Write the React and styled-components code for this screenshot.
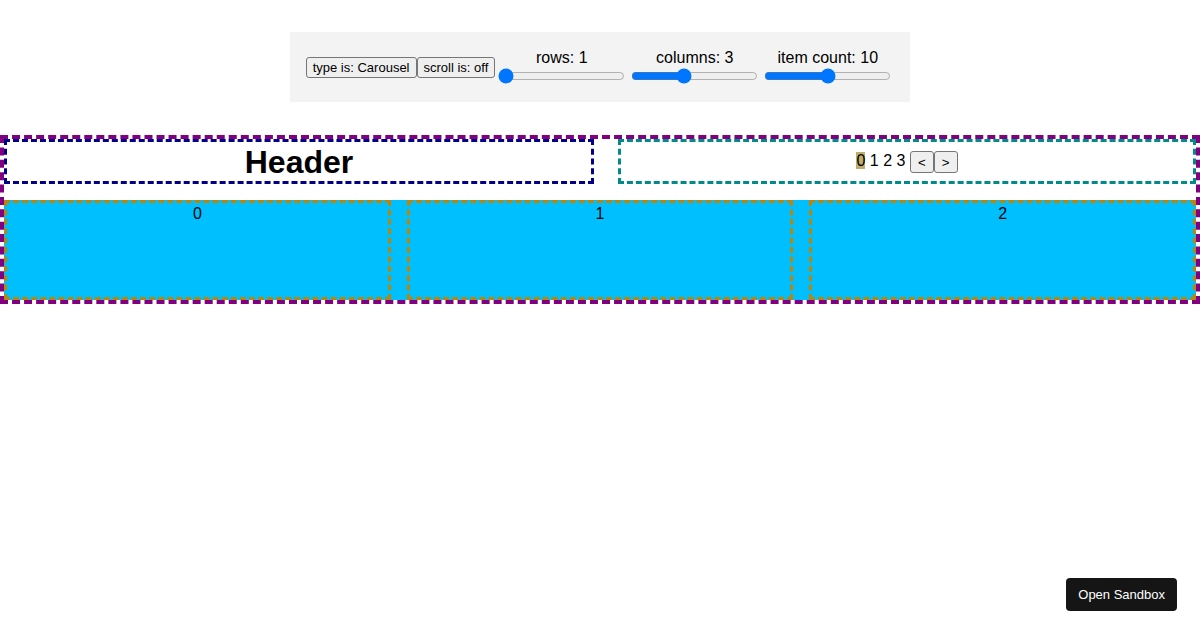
import React, { useState } from "react";
import styled, { createGlobalStyle } from "styled-components";

const GlobalStyle = createGlobalStyle`
  html, body { margin: 0; padding: 0; background: #ffffff; }
  body { font-family: "Liberation Sans", Arial, sans-serif; color: #000; }
`;

const Page = styled.div`
  padding-top: 32px;
`;

const Controls = styled.div`
  width: fit-content;
  margin: 0 auto 33px;
  background: #f3f3f3;
  padding: 16px;
  display: flex;
  align-items: center;
`;

const ToggleButton = styled.button`
  font-family: "Liberation Sans", Arial, sans-serif;
  font-size: 13px;
  line-height: 15px;
  padding: 2px 6px;
  margin: 0;
  background: #efefef;
  color: #000;
  border: 1px solid #767676;
  border-radius: 3px;
  cursor: pointer;
`;

const SliderField = styled.label`
  display: flex;
  flex-direction: column;
  align-items: center;
  font-size: 16px;
  line-height: 18px;
  padding-top: 1px;
`;

const Range = styled.input`
  width: 127px;
  height: 16px;
  margin: 1px 3px 2px;
  accent-color: #0075ff;
`;

const Carousel = styled.div`
  border: 4px dashed purple;
  display: flex;
  flex-direction: column;
  gap: 16px;
`;

const HeaderRow = styled.div`
  display: grid;
  grid-template-columns: 590px 1fr;
  gap: 24px;
`;

const TitleBox = styled.div`
  height: 45px;
  box-sizing: border-box;
  border: 3px dashed darkblue;
  display: flex;
  align-items: center;
  justify-content: center;
`;

const Title = styled.h1`
  margin: 0;
  padding-top: 2px;
  font-size: 32px;
  font-weight: bold;
  line-height: 37px;
`;

const PagerBox = styled.div`
  height: 45px;
  box-sizing: border-box;
  border: 3px dashed darkcyan;
  display: flex;
  align-items: center;
  justify-content: center;
`;

const Pager = styled.div`
  font-size: 16px;
  line-height: 18px;
  padding-top: 1px;
`;

const PageNum = styled.span`
  background: ${(p) => (p.$active ? "#bdae6b" : "transparent")};
  cursor: pointer;
`;

const NavButton = styled.button`
  font-family: "Liberation Sans", Arial, sans-serif;
  font-size: 13.333px;
  line-height: 15px;
  height: 22px;
  padding: 1px 7px;
  margin: 0;
  background: #efefef;
  color: #000;
  border: 1px solid #767676;
  border-radius: 3px;
  cursor: pointer;
  vertical-align: middle;
`;

const ItemRow = styled.div`
  display: grid;
  grid-template-columns: repeat(${(p) => p.$cols}, 1fr);
  gap: 16px;
  background: deepskyblue;
`;

const Item = styled.div`
  height: 100px;
  box-sizing: border-box;
  border: 3px dashed darkgoldenrod;
  background: deepskyblue;
  text-align: center;
  font-size: 16px;
  line-height: 18px;
  padding-top: 2px;
`;

const SandboxButton = styled.button`
  position: fixed;
  right: 23px;
  bottom: 19px;
  height: 33px;
  padding: 0 12px;
  background: #151515;
  color: #fff;
  border: none;
  border-radius: 4px;
  font-family: "Liberation Sans", Arial, sans-serif;
  font-size: 13px;
  cursor: pointer;
`;

export default function App() {
  const [type, setType] = useState("Carousel");
  const [scroll, setScroll] = useState(false);
  const [rows, setRows] = useState(1);
  const [cols, setCols] = useState(3);
  const [count, setCount] = useState(10);
  const [page, setPage] = useState(0);

  const perPage = rows * cols;
  const pages = Math.max(1, Math.ceil(count / perPage));
  const start = page * perPage;
  const items = [];
  for (let i = start; i < Math.min(count, start + perPage); i++) items.push(i);

  return (
    <Page>
      <GlobalStyle />
      <Controls>
        <ToggleButton onClick={() => setType(type === "Carousel" ? "Grid" : "Carousel")}>
          type is: {type}
        </ToggleButton>
        <ToggleButton onClick={() => setScroll(!scroll)}>
          scroll is: {scroll ? "on" : "off"}
        </ToggleButton>
        <SliderField>
          rows: {rows}
          <Range type="range" min={1} max={5} value={rows} onChange={(e) => setRows(+e.target.value)} />
        </SliderField>
        <SliderField>
          columns: {cols}
          <Range type="range" min={1} max={6} value={cols} onChange={(e) => setCols(+e.target.value)} />
        </SliderField>
        <SliderField>
          item count: {count}
          <Range type="range" min={0} max={20} value={count} onChange={(e) => setCount(+e.target.value)} />
        </SliderField>
      </Controls>

      <Carousel>
        <HeaderRow>
          <TitleBox>
            <Title>Header</Title>
          </TitleBox>
          <PagerBox>
            <Pager>
              {Array.from({ length: pages }).map((_, i) => (
                <React.Fragment key={i}>
                  <PageNum $active={i === page} onClick={() => setPage(i)}>{i}</PageNum>{" "}
                </React.Fragment>
              ))}
              <NavButton onClick={() => setPage((page - 1 + pages) % pages)}>&lt;</NavButton>
              <NavButton onClick={() => setPage((page + 1) % pages)}>&gt;</NavButton>
            </Pager>
          </PagerBox>
        </HeaderRow>
        <ItemRow $cols={cols}>
          {items.map((i) => (
            <Item key={i}>{i}</Item>
          ))}
        </ItemRow>
      </Carousel>

      <SandboxButton>Open Sandbox</SandboxButton>
    </Page>
  );
}
